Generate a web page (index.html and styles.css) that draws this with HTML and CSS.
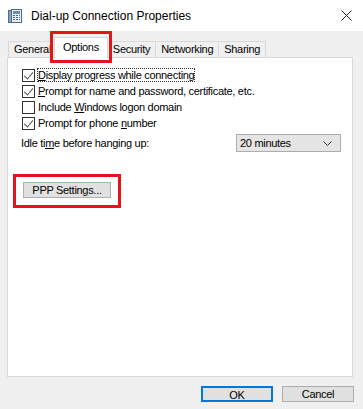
FILE: index.html
```html
<!DOCTYPE html>
<html lang="en">
<head>
    <meta charset="UTF-8">
    <title>Dial-up Connection Properties</title>
    <link rel="stylesheet" href="styles.css">
</head>
<body>

<div class="window">
    <div class="titlebar">
        <svg class="app-icon" width="14" height="14" viewBox="0 0 14 14">
            <rect x="0.5" y="1.5" width="3" height="12" fill="#8ea6bd" stroke="#4d6a86"/>
            <rect x="3.5" y="0.5" width="10" height="13" fill="#e6edf4" stroke="#4d6a86"/>
            <rect x="5" y="2" width="7" height="3" fill="#6f8fb0"/>
            <rect x="5" y="6" width="2" height="1" fill="#4d6a86"/>
            <rect x="8" y="6" width="2" height="1" fill="#4d6a86"/>
            <rect x="11" y="6" width="1" height="1" fill="#4d6a86"/>
            <rect x="5" y="8" width="2" height="1" fill="#4d6a86"/>
            <rect x="8" y="8" width="2" height="1" fill="#4d6a86"/>
            <rect x="11" y="8" width="1" height="1" fill="#4d6a86"/>
            <rect x="5" y="10" width="2" height="1" fill="#4d6a86"/>
            <rect x="8" y="10" width="2" height="1" fill="#4d6a86"/>
            <rect x="11" y="10" width="1" height="1" fill="#4d6a86"/>
        </svg>
        <span class="title">Dial-up Connection Properties</span>
        <svg class="close" width="11" height="11" viewBox="0 0 11 11">
            <path d="M0.5 0.5 L10.5 10.5 M10.5 0.5 L0.5 10.5" stroke="#222" stroke-width="1"/>
        </svg>
    </div>

    <div class="content">
        <div class="tabs">
            <div class="tab">General</div>
            <div class="tab selected">Options</div>
            <div class="tab">Security</div>
            <div class="tab">Networking</div>
            <div class="tab">Sharing</div>
        </div>

        <div class="panel">
            <label class="check-row">
                <span class="box checked"></span>
                <span class="label focus"><u>D</u>isplay progress while connecting</span>
            </label>
            <label class="check-row">
                <span class="box checked"></span>
                <span class="label"><u>P</u>rompt for name and password, certificate, etc.</span>
            </label>
            <label class="check-row">
                <span class="box"></span>
                <span class="label">Include <u>W</u>indows logon domain</span>
            </label>
            <label class="check-row">
                <span class="box checked"></span>
                <span class="label">Prompt for phone <u>n</u>umber</span>
            </label>

            <div class="idle-row">
                <span>Idle ti<u>m</u>e before hanging up:</span>
                <div class="select">
                    <span>20 minutes</span>
                    <svg width="9" height="5" viewBox="0 0 9 5">
                        <path d="M0.5 0.5 L4.5 4.5 L8.5 0.5" fill="none" stroke="#333"/>
                    </svg>
                </div>
            </div>

            <button class="btn ppp">PPP Settin<u>g</u>s...</button>
        </div>

        <div class="footer">
            <button class="btn default">OK</button>
            <button class="btn">Cancel</button>
        </div>
    </div>

    <div class="mark mark-tab"></div>
    <div class="mark mark-ppp"></div>
</div>

</body>
</html>
```

FILE: styles.css
```css
* {
    margin: 0;
    padding: 0;
    box-sizing: border-box;
}

body {
    font-family: 'Liberation Sans', Arial, sans-serif;
    font-size: 11px;
    letter-spacing: -0.3px;
    color: #000;
    background: #f0f0f0;
}

u {
    text-decoration: underline;
    text-underline-offset: 1px;
}

.window {
    position: relative;
    width: 363px;
    height: 409px;
    display: flex;
    flex-direction: column;
    background: #f0f0f0;
}

/* Title bar */
.titlebar {
    height: 31px;
    background: #fff;
    display: flex;
    align-items: center;
    padding-left: 8px;
}

.app-icon {
    margin-right: 9px;
}

.title {
    font-size: 12px;
    letter-spacing: 0;
    flex: 1;
    padding-top: 1px;
}

.close {
    margin-right: 11px;
}

/* Content */
.content {
    flex: 1;
    display: flex;
    flex-direction: column;
    padding: 5px 10px 0 7px;
}

.tabs {
    display: flex;
    align-items: flex-end;
    padding-left: 1px;
    height: 21px;
}

.tab {
    height: 16px;
    line-height: 15px;
    padding: 0 5px;
    background: #f0f0f0;
    border: 1px solid #d9d9d9;
    border-bottom: none;
    margin-right: -1px;
}

.tab.selected {
    position: relative;
    z-index: 2;
    height: 21px;
    line-height: 19px;
    background: #fff;
    margin: 0 -1px -1px -2px;
    padding: 0 8px;
}

.panel {
    height: 320px;
    background: #fff;
    border: 1px solid #d9d9d9;
    padding: 9px 10px 0 14px;
    display: flex;
    flex-direction: column;
    align-items: flex-start;
}

.check-row {
    display: flex;
    align-items: center;
    height: 16px;
}

.box {
    width: 13px;
    height: 13px;
    border: 1px solid #333;
    background: #fff;
    margin-right: 2px;
    position: relative;
}

.box.checked::after {
    content: "";
    position: absolute;
    left: 3px;
    top: 0px;
    width: 4px;
    height: 8px;
    border: solid #555;
    border-width: 0 1px 1px 0;
    transform: rotate(40deg);
}

.label {
    padding: 1px 1px;
    white-space: nowrap;
}

.label.focus {
    outline: 1px dotted #333;
    outline-offset: -1px;
}

.idle-row {
    width: 100%;
    display: flex;
    justify-content: space-between;
    align-items: center;
    margin-top: 3px;
    height: 18px;
}

.idle-row > span {
    margin-left: -1px;
}

.select {
    width: 105px;
    height: 18px;
    background: #e5e5e5;
    border: 1px solid #adadad;
    display: flex;
    align-items: center;
    justify-content: space-between;
    padding: 0 8px 0 3px;
    margin-right: 1px;
}

.btn {
    font-family: inherit;
    font-size: 11px;
    letter-spacing: -0.3px;
    color: #000;
    background: #e1e1e1;
    border: 1px solid #adadad;
    height: 16px;
    line-height: 14px;
}

.ppp {
    width: 88px;
    margin-top: 30px;
    margin-left: 1px;
}

.footer {
    flex: 1;
    display: flex;
    justify-content: flex-end;
    align-items: flex-start;
    gap: 9px;
    padding-top: 9px;
    margin-right: -1px;
}

.footer .btn {
    width: 72px;
}

.btn.default {
    border: 2px solid #0078d7;
}

/* Red annotation boxes */
.mark {
    position: absolute;
    border: 3px solid #e5141b;
}

.mark-tab {
    left: 50px;
    top: 31px;
    width: 62px;
    height: 32px;
}

.mark-ppp {
    left: 13px;
    top: 174px;
    width: 108px;
    height: 34px;
}
```
